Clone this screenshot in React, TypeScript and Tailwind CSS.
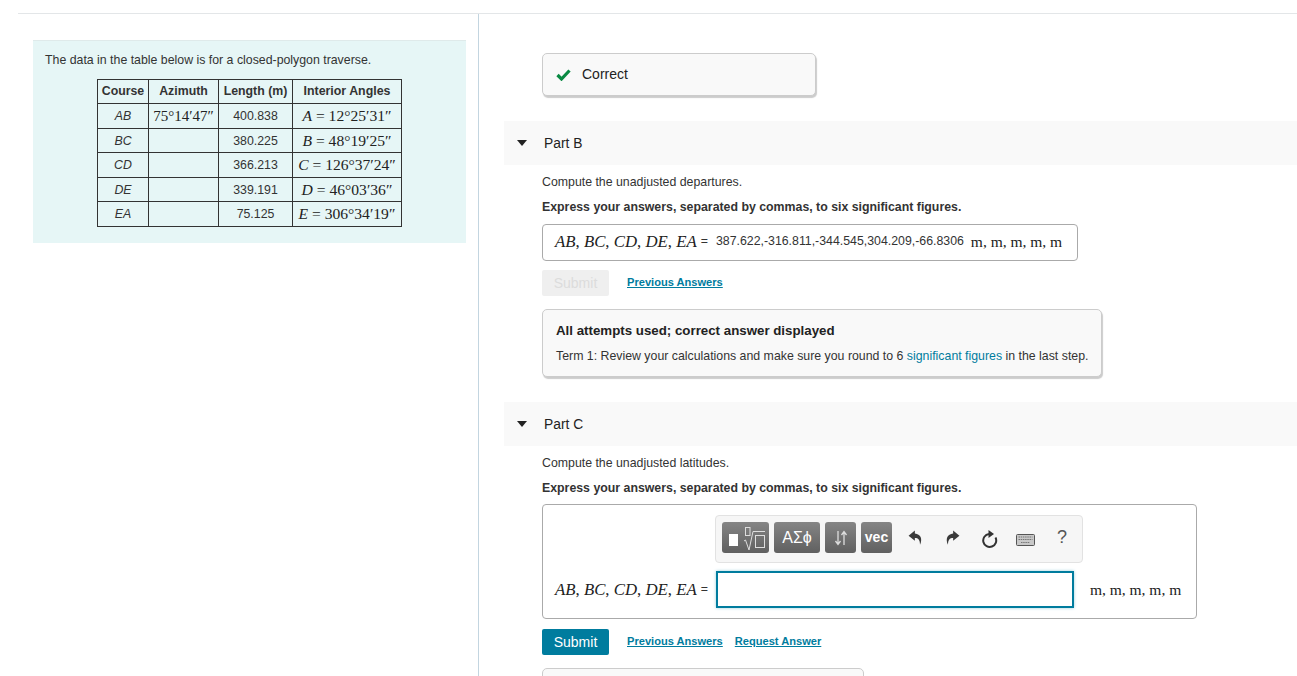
const serif = "font-['Liberation_Serif',serif]";
const link = 'mb-[2px] text-[11.100px] font-bold text-[#007c9e] underline';

const rows = [
  { course: 'AB', azimuth: '75°14′47″', length: '400.838', name: 'A', angle: '12°25′31″' },
  { course: 'BC', azimuth: '', length: '380.225', name: 'B', angle: '48°19′25″' },
  { course: 'CD', azimuth: '', length: '366.213', name: 'C', angle: '126°37′24″' },
  { course: 'DE', azimuth: '', length: '339.191', name: 'D', angle: '46°03′36″' },
  { course: 'EA', azimuth: '', length: '75.125', name: 'E', angle: '306°34′19″' },
];

function PartHeader({ title }: { title: string }) {
  return (
    <div className="flex h-[44px] items-center bg-[#f9f9f9] pl-[13px]">
      <span className="h-0 w-0 border-x-[5px] border-t-[6px] border-x-transparent border-t-[#222]" />
      <span className="ml-[17px] mt-[2px] text-[13.800px] text-[#222]">{title}</span>
    </div>
  );
}

function Vars() {
  return (
    <span className={`${serif} text-[16.800px] text-[#222]`}>
      <i>AB</i>, <i>BC</i>, <i>CD</i>, <i>DE</i>, <i>EA</i>
    </span>
  );
}

function Toolbar() {
  const btn = 'flex h-[31px] items-center justify-center rounded-[3px] bg-gradient-to-b from-[#858585] to-[#606060] text-white';
  return (
    <div className="flex h-[48px] w-[368px] items-start rounded-[4px] border border-[#e2e2e2] bg-[#f6f6f6] pl-[6px] pt-[6px]">
      <div className={`${btn} w-[47px] gap-[4px] pl-[4px]`}>
        <span className="mt-[5px] h-[12px] w-[9px] bg-white" />
        <svg width="24" height="24" viewBox="0 0 24 24" fill="none" stroke="#dedede" strokeWidth="1">
          <rect x="3.500" y="1.500" width="4.500" height="8" />
          <path d="M2 15l1.500-1 3.500 10 4-18.500h12" />
          <rect x="13.500" y="9.500" width="9" height="12" />
        </svg>
      </div>
      <div className={`${btn} ml-[5px] w-[46px] text-[16px] text-[#dedede]`}>ΑΣϕ</div>
      <div className={`${btn} ml-[5px] w-[31px]`}>
        <svg width="14" height="16" viewBox="0 0 14 16" fill="none" stroke="#dedede" strokeWidth="1.300">
          <path d="M4 1v13M1.500 11l2.500 3.500L6.500 11M10 15V2M7.500 5L10 1.500 12.500 5" />
        </svg>
      </div>
      <div className={`${btn} ml-[5px] w-[31px] text-[14px] font-bold text-[#dedede]`}>vec</div>
      <svg className="ml-[16px] mt-[8px]" width="16" height="16" viewBox="0 0 14 14" fill="#3a3a3a">
        <path d="M6 0.500L0.500 5 6 9.500V7c3 0 4.500 1.500 4.500 6 2.500-5.500 0.500-9.500-4.500-10z" />
      </svg>
      <svg className="ml-[20px] mt-[8px]" width="16" height="16" viewBox="0 0 14 14" fill="#3a3a3a">
        <path d="M8 0.500L13.500 5 8 9.500V7c-3 0-4.500 1.500-4.500 6C1 7.500 3 3.500 8 3z" />
      </svg>
      <svg className="ml-[21px] mt-[8px]" width="18" height="18" viewBox="0 0 18 18" fill="none">
        <path d="M8 4A6.500 6.500 0 1 0 14.500 7.500" stroke="#333" strokeWidth="2" />
        <path d="M7.500 0l5.500 4-5.500 4z" fill="#333" />
      </svg>
      <svg className="ml-[17px] mt-[12px]" width="19" height="12" viewBox="0 0 19 12">
        <rect x="0.500" y="0.500" width="18" height="11" rx="1" fill="#c8c8c8" stroke="#555" />
        <path d="M2.500 3h14M2.500 5.500h14M5 8.500h9" stroke="#777" strokeWidth="1.200" strokeDasharray="1.500 0.700" />
      </svg>
      <span className="ml-[22px] mt-[2px] text-[18px] text-[#555]">?</span>
    </div>
  );
}

export default function App() {
  return (
    <div className="h-[676px] overflow-hidden bg-white pl-[18px] pt-[13px] font-['Liberation_Sans',sans-serif] text-[12.330px] text-[#333]">
      <div className="flex h-full border-t border-[#e3e6e8]">
        {/* left column */}
        <div className="w-[461px] shrink-0 border-r border-[#c3d5e0] pl-[15px] pt-[26px]">
          <div className="h-[203px] w-[433px] border-t border-[#dfeaea] bg-[#e6f6f6] pl-[12px] pt-[12px]">
            <p className="leading-[14px] text-[#333]">The data in the table below is for a closed-polygon traverse.</p>
            <table className="ml-[52px] mt-[12px] table-fixed border-collapse text-center">
              <thead>
                <tr className="h-[24px] font-bold">
                  <th className="w-[51px] border border-[#333] p-0 text-[#333]">Course</th>
                  <th className="w-[70px] border border-[#333] p-0 text-[#333]">Azimuth</th>
                  <th className="w-[74px] border border-[#333] p-0 text-[#333]">Length (m)</th>
                  <th className="w-[109px] border border-[#333] p-0 text-[12.400px] text-[#333]">Interior Angles</th>
                </tr>
              </thead>
              <tbody>
                {rows.map((r) => (
                  <tr key={r.course} className="h-[24.500px]">
                    <td className="border border-[#333] p-0 pt-[1px] italic">{r.course}</td>
                    <td className={`border border-[#333] p-0 ${serif} text-[15px] text-[#222]`}>{r.azimuth}</td>
                    <td className="border border-[#333] p-0 pt-[1px]">{r.length}</td>
                    <td className={`border border-[#333] p-0 ${serif} text-[15.600px] text-[#222]`}>
                      <i>{r.name}</i> = {r.angle}
                    </td>
                  </tr>
                ))}
              </tbody>
            </table>
          </div>
        </div>

        {/* right column */}
        <div className="min-w-0 flex-1 pl-[25px] pt-[39px]">
          <div className="ml-[38px] flex h-[43px] w-[274px] items-center rounded-[5px] border border-[#ccc] bg-[#f9f9f9] pl-[13px] shadow-[1px_2px_1px_#ccc]">
            <svg width="15" height="12" viewBox="0 0 15 12" fill="none" stroke="#0a8a43" strokeWidth="3.200">
              <path d="M1.500 6l4 4 8-8.500" />
            </svg>
            <span className="ml-[11px] text-[14px] text-[#222]">Correct</span>
          </div>

          <div className="mt-[25px]">
            <PartHeader title="Part B" />
          </div>
          <div className="pl-[38px]">
            <p className="mt-[10px] leading-[14px]">Compute the unadjusted departures.</p>
            <p className="mt-[11px] font-bold leading-[14px]">Express your answers, separated by commas, to six significant figures.</p>
            <div className="mt-[10px] flex h-[37px] w-[536px] items-center rounded-[4px] border border-[#aaa] pb-[2px] pl-[12px]">
              <Vars />
              <span className="ml-[4px]">=</span>
              <span className="ml-[8px] text-[#333]">387.622,-316.811,-344.545,304.209,-66.8306</span>
              <span className={`ml-[7px] ${serif} text-[15.500px] text-[#222]`}>m, m, m, m, m</span>
            </div>
            <div className="mt-[9px] flex items-center">
              <span className="flex h-[26px] w-[67px] items-center justify-center rounded-[2px] bg-[#efefef] text-[14px] text-[#dcdcdc]">Submit</span>
              <a className={`ml-[18px] ${link}`}>Previous Answers</a>
            </div>
            <div className="mt-[13px] h-[68px] w-[560px] rounded-[5px] border border-[#ccc] bg-[#f9f9f9] pl-[13px] pt-[13px] shadow-[1px_2px_1px_#ccc]">
              <p className="text-[13.300px] font-bold leading-[15px] text-[#222]">All attempts used; correct answer displayed</p>
              <p className="mt-[11px] leading-[14px]">
                Term 1: Review your calculations and make sure you round to 6 <span className="text-[#007c9e]">significant figures</span> in the last step.
              </p>
            </div>
          </div>

          <div className="mt-[25px]">
            <PartHeader title="Part C" />
          </div>
          <div className="pl-[38px]">
            <p className="mt-[10px] leading-[14px]">Compute the unadjusted latitudes.</p>
            <p className="mt-[11px] font-bold leading-[14px]">Express your answers, separated by commas, to six significant figures.</p>
            <div className="mt-[9px] h-[115px] w-[655px] rounded-[4px] border border-[#aaa] pl-[172px] pt-[10px]">
              <Toolbar />
              <div className="-ml-[160px] mt-[8px] flex items-center">
                <Vars />
                <span className="ml-[4px]">=</span>
                <div className="ml-[8px] h-[37px] w-[358px] border-2 border-[#007c9e] bg-white shadow-[0_0_3px_#9ccfdc]" />
                <span className={`ml-[16px] ${serif} text-[15.500px] text-[#222]`}>m, m, m, m, m</span>
              </div>
            </div>
            <div className="mt-[10px] flex items-center">
              <span className="flex h-[26px] w-[67px] items-center justify-center rounded-[2px] bg-[#007c9e] text-[14px] text-white">Submit</span>
              <a className={`ml-[18px] ${link}`}>Previous Answers</a>
              <a className={`ml-[12px] ${link}`}>Request Answer</a>
            </div>
            <div className="mt-[13px] h-[40px] w-[322px] rounded-[5px] border border-[#ccc] bg-[#f9f9f9]" />
          </div>
        </div>
      </div>
    </div>
  );
}
